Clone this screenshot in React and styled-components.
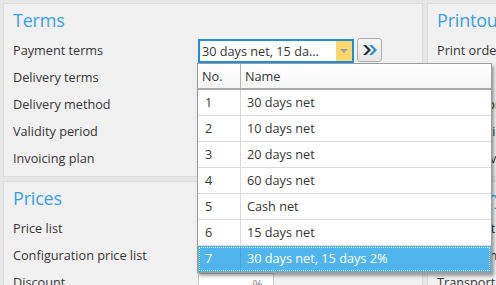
import React from "react";
import styled, { createGlobalStyle } from "styled-components";

const GlobalStyle = createGlobalStyle`
  html, body {
    margin: 0;
    padding: 0;
    background: #e7e7e7;
  }
  body {
    font-family: "Open Sans", "Noto Sans", sans-serif;
    font-size: 12.7px;
    color: #353535;
  }
`;

const Screen = styled.div`
  width: 496px;
  height: 285px;
  overflow: hidden;
  display: flex;
  gap: 4px;
  padding: 3px 0 0 3px;
  box-sizing: border-box;
`;

const Column = styled.div`
  display: flex;
  flex-direction: column;
  gap: 4px;
  width: ${({ $width }) => $width}px;
  flex: none;
  position: relative;
  z-index: ${({ $front }) => ($front ? 2 : 1)};
`;

const Panel = styled.section`
  background: #f0f0f0;
  border: 1px solid #dcdcdc;
  padding: 3px 9px 4px 9px;
  height: ${({ $height }) => ($height ? `${$height}px` : "auto")};
  box-sizing: border-box;
`;

const Title = styled.h2`
  margin: 0 0 4px 0;
  font-size: 18px;
  font-weight: 400;
  line-height: 26px;
  letter-spacing: -0.2px;
  color: #3a9fe3;
  white-space: nowrap;
`;

const Row = styled.div`
  display: grid;
  grid-template-columns: 185px auto;
  align-items: center;
  height: 27px;
  white-space: nowrap;
`;

const Label = styled.span`
  line-height: 27px;
`;

const Control = styled.div`
  display: flex;
  align-items: center;
  gap: 3px;
`;

const ComboWrap = styled.div`
  position: relative;
`;

const Combo = styled.div`
  width: 156px;
  height: 24px;
  box-sizing: border-box;
  border: 2px solid #1e8fd8;
  background: #fff;
  display: flex;
  align-items: stretch;
`;

const ComboText = styled.span`
  flex: 1;
  padding-left: 2px;
  line-height: 20px;
  overflow: hidden;
  white-space: nowrap;
`;

const ComboArrow = styled.span`
  width: 16px;
  background: #fcd76c;
  display: flex;
  align-items: center;
  justify-content: center;
  &::after {
    content: "";
    border-left: 4px solid transparent;
    border-right: 4px solid transparent;
    border-top: 4px solid #9d9d9d;
  }
`;

const JumpButton = styled.button`
  width: 25px;
  height: 24px;
  padding: 0;
  margin-top: -1px;
  border: 1px solid #acacac;
  border-radius: 3px;
  background: linear-gradient(#f7f7f7, #e6e6e6);
  display: flex;
  align-items: center;
  justify-content: center;
`;

const Popup = styled.div`
  position: absolute;
  top: 24px;
  left: -1px;
  width: 293px;
  background: #fff;
  border: 1px solid #9c9c9c;
  box-shadow: 2px 3px 3px rgba(0, 0, 0, 0.35);
  z-index: 10;
`;

const GridRow = styled.div`
  display: grid;
  grid-template-columns: 42px 1fr;
  height: 26px;
  box-sizing: border-box;
  border-bottom: ${({ $head }) => ($head ? "2px solid #a9a9a9" : "1px solid #dadada")};
  background: ${({ $selected, $head }) =>
    $selected ? "#4fb5ec" : $head ? "linear-gradient(#ffffff, #f4f4f4)" : "#fff"};
  color: ${({ $selected }) => ($selected ? "#fff" : "#353535")};
  outline: ${({ $selected }) => ($selected ? "1px dotted rgba(255,255,255,0.8)" : "none")};
  outline-offset: -2px;
  &:last-child {
    border-bottom: none;
  }
`;

const Cell = styled.span`
  line-height: ${({ $head }) => ($head ? "24px" : "25px")};
  padding-left: ${({ $pad }) => $pad}px;
  white-space: nowrap;
  border-left: ${({ $divider }) => ($divider ? `1px solid ${$divider}` : "none")};
`;

const DiscountBox = styled.div`
  width: 76px;
  height: 22px;
  margin-top: 2px;
  box-sizing: border-box;
  border: 1px solid #c9c9c9;
  background: #fff;
  text-align: right;
  padding-right: 10px;
  line-height: 20px;
  color: #8a8a8a;
`;

const terms = [
  "30 days net",
  "10 days net",
  "20 days net",
  "60 days net",
  "Cash net",
  "15 days net",
  "30 days net, 15 days 2%",
];

function ChevronsIcon() {
  return (
    <svg width="16" height="12" viewBox="0 0 16 12">
      <path d="M1 1 L6 6 L1 11 L4 11 L9 6 L4 1 Z" fill="#2b2b2b" />
      <path d="M7 1 L12 6 L7 11 L10 11 L15 6 L10 1 Z" fill="#1e8fd8" />
    </svg>
  );
}

function PaymentCombo() {
  return (
    <Control>
      <ComboWrap>
        <Combo>
          <ComboText>30 days net, 15 da…</ComboText>
          <ComboArrow />
        </Combo>
        <Popup>
          <GridRow $head>
            <Cell $head $pad={4}>No.</Cell>
            <Cell $head $pad={4} $divider="#b5b5b5">Name</Cell>
          </GridRow>
          {terms.map((name, i) => {
            const selected = i === terms.length - 1;
            return (
              <GridRow key={name} $selected={selected}>
                <Cell $pad={7}>{i + 1}</Cell>
                <Cell $pad={6} $divider={selected ? "#43a6dc" : "#dadada"}>
                  {name}
                </Cell>
              </GridRow>
            );
          })}
        </Popup>
      </ComboWrap>
      <JumpButton>
        <ChevronsIcon />
      </JumpButton>
    </Control>
  );
}

export default function App() {
  return (
    <>
      <GlobalStyle />
      <Screen>
        <Column $width={420} $front>
          <Panel $height={175}>
            <Title>Terms</Title>
            <Row>
              <Label>Payment terms</Label>
              <PaymentCombo />
            </Row>
            <Row><Label>Delivery terms</Label></Row>
            <Row><Label>Delivery method</Label></Row>
            <Row><Label>Validity period</Label></Row>
            <Row><Label>Invoicing plan</Label></Row>
          </Panel>
          <Panel>
            <Title>Prices</Title>
            <Row><Label>Price list</Label></Row>
            <Row><Label>Configuration price list</Label></Row>
            <Row>
              <Label>Discount</Label>
              <DiscountBox>%</DiscountBox>
            </Row>
          </Panel>
        </Column>
        <Column $width={300}>
          <Panel $height={175}>
            <Title>Printout</Title>
            <Row><Label>Print order</Label></Row>
            <Row><Label>Print pick list</Label></Row>
            <Row><Label>Print in foreign</Label></Row>
            <Row><Label>Print picking list</Label></Row>
            <Row><Label>Print delivery</Label></Row>
          </Panel>
          <Panel>
            <Title>Delivery</Title>
            <Row><Label>Transport route</Label></Row>
            <Row><Label>Forwarding agent</Label></Row>
            <Row><Label>Transport</Label></Row>
          </Panel>
        </Column>
      </Screen>
    </>
  );
}
